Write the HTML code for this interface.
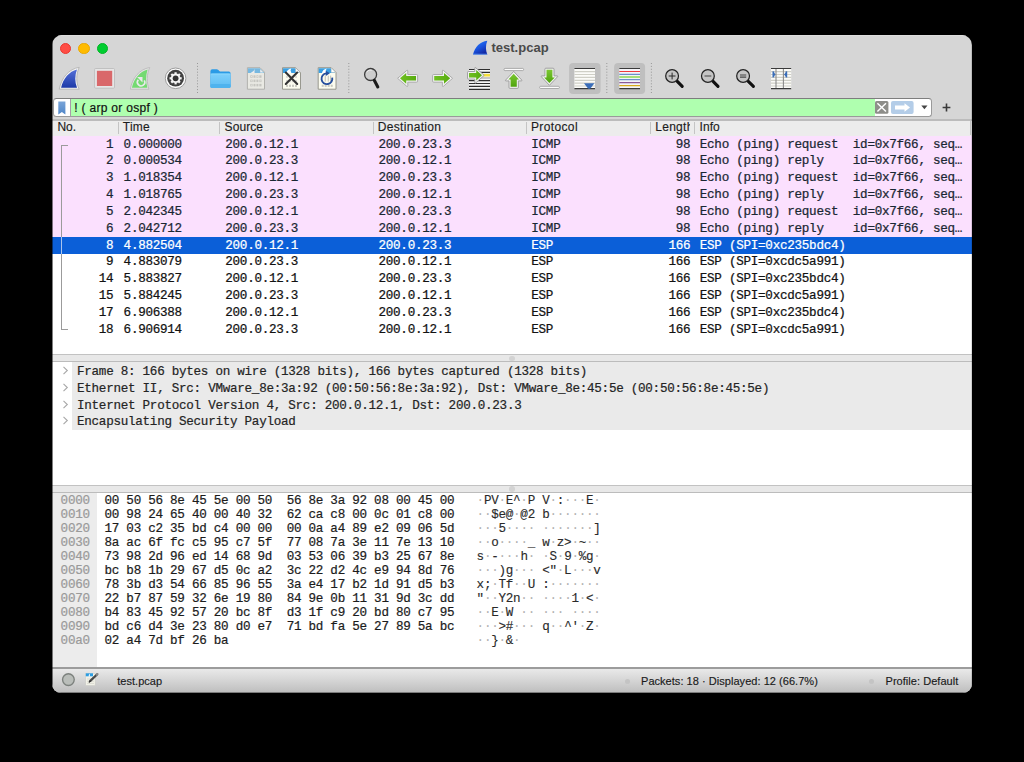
<!DOCTYPE html><html><head><meta charset="utf-8"><title>test.pcap</title><style>
*{margin:0;padding:0;box-sizing:border-box}
html,body{width:1024px;height:762px;background:#000;overflow:hidden}
body{position:relative;font-family:"Liberation Sans",sans-serif;font-size:12px;color:#1a1a1a}
.abs{position:absolute}
#win{position:absolute;left:52px;top:35px;width:920px;height:658px;border-radius:10px 10px 9px 9px;background:#d6d6d6;overflow:hidden}
#inner{position:absolute;left:-52px;top:-35px;width:1024px;height:762px}
.mono{font-family:"Liberation Mono",monospace;font-size:12.6px;letter-spacing:-0.2713px;white-space:pre;-webkit-text-stroke:0.24px currentColor}
.tl{position:absolute;width:11.6px;height:11.6px;border-radius:50%;top:42.6px}
#title{position:absolute;left:491.5px;top:41px;font-weight:bold;font-size:13px;color:#4a4a4a;line-height:14px;white-space:pre}
#filter{position:absolute;left:53.4px;top:98.1px;width:878.8px;height:18.65px;background:#fff;border:1px solid #9a9a9a;border-top-color:#7e7e7e;border-radius:3.5px;overflow:hidden}
#fgreen{position:absolute;left:15.4px;top:0;width:804.8px;height:17px;background:#afffaf;border-left:0.6px solid #a89aa8}
#ftext{position:absolute;left:74.3px;top:101px;font-size:12px;line-height:14px;color:#111;white-space:pre;letter-spacing:0.3px;-webkit-text-stroke:0.2px #111}
#hdr{position:absolute;left:52px;top:120.8px;width:920px;height:15.3px;background:#ececec}
.hl{position:absolute;top:120.2px;font-size:12px;line-height:14px;color:#1c1c1c;white-space:pre;-webkit-text-stroke:0.15px #1c1c1c}
.hd{position:absolute;top:122px;width:1px;height:12px;background:#c4c4c4}
.row{position:absolute;left:52px;width:920px;height:17.14px}
.icmp{background:#fbe0fe;color:#1a2733}
.esp{background:#fff;color:#121212}
.sel{background:#0b5fd8;color:#fff}
.c{position:absolute;top:0.7px;line-height:16.84px;height:16.84px}
.r{text-align:right}
.split{position:absolute;left:52px;width:920px;background:#e8e8e8;border-top:1px solid #c2c2c2;border-bottom:1px solid #bcbcbc}
.drow{position:absolute;left:72px;width:900px;height:17.14px;background:#eaeaea}
.dt{position:absolute;left:77px;line-height:16.84px;color:#242424;-webkit-text-stroke:0.2px #242424}
.arr{position:absolute;left:61.5px;width:7px;height:9px}
.hx{position:absolute;line-height:14px;height:14px}
.hx i{font-style:normal;color:#b2b2b2;-webkit-text-stroke:0}
#status{position:absolute;left:52px;top:667px;width:920px;height:26px;border-top:2px solid #9c9c9c;background:linear-gradient(#e9e9e9,#d6d6d6 45%,#bdbdbd)}
.st{position:absolute;top:673.6px;font-size:11px;line-height:14px;color:#1a1a1a;white-space:pre;letter-spacing:0.04px;-webkit-text-stroke:0.15px #1a1a1a}
</style></head><body>
<div id="win"><div id="inner">
<div class="abs" style="left:52px;top:35px;width:920px;height:1.3px;background:#dedede"></div>
<div class="tl" style="left:59.6px;background:#ff4d45;border:0.6px solid #ea372f"></div>
<div class="tl" style="left:78.3px;background:#ffbb00;border:0.6px solid #e8a700"></div>
<div class="tl" style="left:96.9px;background:#00cd30;border:0.6px solid #00b526"></div>
<svg class="abs" style="left:472px;top:40px" width="17" height="16" viewBox="0 0 17 16"><defs><linearGradient id="tf" x1="0" y1="0" x2="0.6" y2="1"><stop offset="0" stop-color="#2a86ff"/><stop offset="0.55" stop-color="#1a55e0"/><stop offset="1" stop-color="#1228a4"/></linearGradient></defs><path d="M15.3 0.8 C8 1.5 3 7 1 14.6 L15.3 14.6 C13.6 10.5 13.4 5.5 15.3 0.8 Z" fill="url(#tf)"/><path d="M1.2 14.2 L15.2 14.2" stroke="#5a9af8" stroke-width="1" opacity=".8"/></svg>
<div id="title">test.pcap</div>
<svg class="abs" style="left:52px;top:60px" width="920" height="38" viewBox="52 60 920 38">
<defs>
<linearGradient id="gBlue" x1="0" y1="0" x2="0" y2="1"><stop offset="0" stop-color="#5570d8"/><stop offset="1" stop-color="#1d3aa8"/></linearGradient>
<linearGradient id="gGrn" x1="0" y1="0" x2="0" y2="1"><stop offset="0" stop-color="#7cc832"/><stop offset="1" stop-color="#4fa30d"/></linearGradient>
<linearGradient id="gGrnH" x1="0" y1="0" x2="1" y2="0"><stop offset="0" stop-color="#6fbf22"/><stop offset="1" stop-color="#58ac10"/></linearGradient>
<linearGradient id="gFold" x1="0" y1="0" x2="0" y2="1"><stop offset="0" stop-color="#7fd0fb"/><stop offset="1" stop-color="#5bbcf3"/></linearGradient>
</defs>
<!-- separators -->
<g stroke="#8e8e8e" stroke-width="1" stroke-dasharray="1 1.9" opacity=".85">
<path d="M197.5 63 V93"/><path d="M348.8 63 V93"/><path d="M606.8 63 V93"/><path d="M651.4 63 V93"/>
</g>

<!-- 1 shark fin (start) -->
<path d="M79.2 67.3 C68.8 69 61.6 77.5 59.2 89.2 L79.2 89.2 C76.0 82.5 76 74.5 79.2 67.3 Z" fill="#f2f2f2" stroke="#b4b4b4" stroke-width="0.9"/>
<path d="M77 69.4 C69.4 71.2 63 78.4 61.1 87.8 L77 87.8 C74.7 81.8 74.7 75.4 77 69.4 Z" fill="url(#gBlue)"/>

<!-- 2 stop -->
<rect x="94.6" y="68.5" width="19.9" height="19.7" rx="1" fill="#e6e6e6" stroke="#bcbcbc" stroke-width="0.9"/>
<rect x="96.9" y="70.8" width="15.3" height="15.2" fill="#d9686a"/>

<!-- 3 restart fin (green) -->
<path d="M149.7 67.5 C139.6 69.2 132.4 77.6 130.3 89.2 L149 89.2 C146.6 82.5 146.6 74.5 149.7 67.5 Z" fill="#e6e4e6" stroke="#bababa" stroke-width="0.9"/>
<path d="M147.6 69.6 C140.4 71.4 134 78.4 131.9 87.7 L147.4 87.7 C145.7 81.8 145.7 75.6 147.6 69.6 Z" fill="#74da72"/>
<path d="M138.3 79.7 A3.7 3.7 0 1 0 144.3 80.3" fill="none" stroke="#ebe9ec" stroke-width="1.6"/>
<path d="M137.1 77 L142.5 77 L142.5 82.5 Z" fill="#ece8ed"/>

<!-- 4 options gear -->
<circle cx="175.6" cy="78.3" r="10.3" fill="#fdfdfd" stroke="#9c9c9c" stroke-width="1"/>
<circle cx="175.6" cy="78.2" r="8.4" fill="#414141"/>
<g fill="#f4f4f4"><circle cx="175.6" cy="78.3" r="4.8"/>
<g transform="translate(175.6 78.3)">
<rect x="-1.1" y="-6.1" width="2.2" height="12.2"/>
<rect x="-1.1" y="-6.1" width="2.2" height="12.2" transform="rotate(45)"/>
<rect x="-1.1" y="-6.1" width="2.2" height="12.2" transform="rotate(90)"/>
<rect x="-1.1" y="-6.1" width="2.2" height="12.2" transform="rotate(135)"/>
</g></g>
<circle cx="175.6" cy="78.3" r="2.9" fill="#333"/>

<!-- 5 folder -->
<path d="M210.4 71.2 Q210.4 69.3 212.3 69.3 H216.6 Q217.6 69.3 218.4 70.1 L219.3 71 Q220 71.6 221 71.6 H228.8 Q230.6 71.6 230.6 73.4 V86 Q230.6 87.9 228.8 87.9 H212.2 Q210.4 87.9 210.4 86 Z" fill="#2b9be6"/>
<rect x="210.4" y="73.6" width="20.2" height="14.3" rx="1.6" fill="url(#gFold)"/>
<rect x="210.4" y="84" width="20.2" height="3.9" rx="1.4" fill="#4fb3ee"/>
<rect x="210.4" y="73.6" width="20.2" height="1" fill="#8ad6fc"/>

<!-- 6 save (disabled) -->
<g opacity="0.58">
<path d="M247.4 67.7 H260 L264.5 72.2 V89.2 H247.4 Z" fill="#f7f7ee" stroke="#8e8e88" stroke-width="0.9"/>
<path d="M247.9 68.2 H259.8 L264 72.4 V72.9 H247.9 Z" fill="#34a3e8"/>
<path d="M250.6 72.9 Q253.6 72 254.9 69 Q254.2 71.2 254.6 72.9 Z" fill="#fff"/>
<path d="M260.2 69.2 V72.4 H263.5 Z" fill="#fff"/>
<g fill="#b9b9b1"><rect x="250.3" y="75.3" width="11.2" height="2.5"/><rect x="250.3" y="79.6" width="11.2" height="2.5"/><rect x="250.3" y="83.9" width="11.2" height="2.5"/></g>
<g fill="#f7f7ee"><rect x="252.6" y="75" width="0.9" height="12"/><rect x="255.5" y="75" width="0.9" height="12"/><rect x="258.4" y="75" width="0.9" height="12"/>
<rect x="251" y="76" width="0.9" height="1.1"/><rect x="256.8" y="76" width="0.9" height="1.1"/><rect x="251" y="80.3" width="0.9" height="1.1"/><rect x="259.8" y="80.3" width="0.9" height="1.1"/><rect x="251" y="84.6" width="0.9" height="1.1"/></g>
</g>

<!-- 7 close file -->
<path d="M282.5 67.7 H295.6 L300.5 72.6 V89.2 H282.5 Z" fill="#fcfcef" stroke="#8e8e86" stroke-width="0.9"/>
<path d="M283 68.2 H295.4 L299.4 72.2 V72.9 H283 Z" fill="#3b9fe2"/>
<path d="M286.4 72.9 Q287.2 69.4 291.2 68.6 Q289.8 70.4 291.4 72.9 Z" fill="#fff"/>
<path d="M295.6 68 V72.5 H300.2 Z" fill="#fff" stroke="#b0b0a8" stroke-width="0.4"/>
<g fill="#c9c9c0"><rect x="286" y="84.7" width="2" height="2.2"/><rect x="289" y="84.7" width="2" height="2.2"/><rect x="292" y="84.7" width="2" height="2.2"/><rect x="295" y="84.7" width="2" height="2.2"/></g>
<g fill="#d9d9d2"><rect x="286" y="75.6" width="11" height="2.2"/><rect x="286" y="80" width="11" height="2.2"/></g><g fill="#fcfcef"><rect x="288.3" y="75" width="0.8" height="8"/><rect x="291.2" y="75" width="0.8" height="8"/><rect x="294.1" y="75" width="0.8" height="8"/></g><path d="M285.8 72.6 L297.2 83.9 M297.2 72.6 L285.8 83.9" stroke="#333" stroke-width="2.1" stroke-linecap="round"/>

<!-- 8 reload -->
<path d="M318.2 67.7 H331.2 L336 72.5 V89.2 H318.2 Z" fill="#fcfcef" stroke="#8e8e86" stroke-width="0.9"/>
<path d="M318.7 68.2 H331 L335 72.2 V72.9 H318.7 Z" fill="#3b9fe2"/>
<path d="M322 72.9 Q322.8 69.6 326.6 68.6 Q325.2 70.6 326.4 72.9 Z" fill="#fff"/>
<path d="M331.2 68 V72.4 H335.7 Z" fill="#fff" stroke="#b0b0a8" stroke-width="0.4"/>
<g fill="#c9c9c0"><rect x="321.7" y="84.7" width="2" height="2.2"/><rect x="324.7" y="84.7" width="2" height="2.2"/><rect x="327.7" y="84.7" width="2" height="2.2"/><rect x="330.7" y="84.7" width="2" height="2.2"/>
<rect x="324.7" y="75.6" width="1.2" height="6"/><rect x="327.7" y="75.6" width="1.2" height="6"/><rect x="330" y="75.6" width="1.2" height="6"/></g>
<path d="M332.2 77.6 A5.4 5.4 0 1 1 326.2 73.4" fill="none" stroke="#27509e" stroke-width="1.9"/>
<path d="M325.8 70.8 L329.9 73.2 L325.8 75.9 Z" fill="#27509e"/>

<!-- 9 find (magnifier) -->
<circle cx="370.6" cy="74.5" r="6" fill="#cdcdcd" stroke="#3c3c3c" stroke-width="1.3"/>
<path d="M366.8 72 A4.3 4.3 0 0 1 371.8 70.2" fill="none" stroke="#efefef" stroke-width="0.9"/>
<path d="M374.3 80.3 L377.8 86.9" stroke="#1c1c1c" stroke-width="3.1" stroke-linecap="round"/>

<!-- 10 back -->
<path d="M397.6 78.3 L406.8 70.4 Q407.8 69.8 407.8 71 V74.5 H416.6 Q417.6 74.5 417.6 75.5 V81.2 Q417.6 82.2 416.6 82.2 H407.8 V85.7 Q407.8 86.9 406.8 86.3 Z" fill="#f0f0f0" stroke="#a6a6a6" stroke-width="0.9"/>
<path d="M400 78.3 L406.2 73 V76.1 H416 V80.6 H406.2 V83.7 Z" fill="url(#gGrnH)"/>

<!-- 11 forward -->
<path d="M452.6 78.3 L443.4 70.4 Q442.4 69.8 442.4 71 V74.5 H433.6 Q432.6 74.5 432.6 75.5 V81.2 Q432.6 82.2 433.6 82.2 H442.4 V85.7 Q442.4 86.9 443.4 86.3 Z" fill="#f0f0f0" stroke="#a6a6a6" stroke-width="0.9"/>
<path d="M450.2 78.3 L444 73 V76.1 H434.2 V80.6 H444 V83.7 Z" fill="url(#gGrnH)"/>

<!-- 12 goto -->
<rect x="469" y="69" width="21" height="21" fill="#f6f6f6"/>
<g stroke="#2e2e2e" stroke-width="1.1"><path d="M469 69.5 H490"/><path d="M469 72.4 H490"/><path d="M469 80.6 H490"/><path d="M469 83.5 H490"/><path d="M469 86.4 H490"/><path d="M469 89.4 H490"/></g>
<path d="M469 78 H490" stroke="#9a9a9a" stroke-width="1.1"/>
<rect x="483" y="73.9" width="7" height="2.6" fill="#f5de3c"/>
<path d="M484.2 75.3 L475.6 67.6 Q474.8 67.1 474.8 68.2 V71.5 H468.4 Q467.5 71.5 467.5 72.4 V78.2 Q467.5 79.1 468.4 79.1 H474.8 V82.4 Q474.8 83.5 475.6 83 Z" fill="#f0f0f0" stroke="#9a9a9a" stroke-width="0.9"/>
<path d="M482 75.3 L476.2 70 V73 H469 V77.6 H476.2 V80.6 Z" fill="url(#gGrnH)"/>

<!-- 13 first -->
<rect x="504" y="68.4" width="19.6" height="2.2" rx="1.1" fill="#fbfbfb" stroke="#9a9a9a" stroke-width="0.8"/>
<path d="M513.7 71.4 L521.8 80.1 Q522.3 80.9 521.3 80.9 H518.4 V87.4 Q518.4 88.4 517.4 88.4 H510 Q509 88.4 509 87.4 V80.9 H506.1 Q505.1 80.9 505.6 80.1 Z" fill="#f0f0f0" stroke="#9a9a9a" stroke-width="0.9"/>
<path d="M513.7 73.8 L519 79.4 H516.8 V86.8 H510.6 V79.4 H508.4 Z" fill="url(#gGrn)"/>

<!-- 14 last -->
<rect x="539.6" y="86.3" width="19.8" height="2.2" rx="1.1" fill="#fbfbfb" stroke="#9a9a9a" stroke-width="0.8"/>
<path d="M549.4 85.3 L541.3 76.7 Q540.8 75.9 541.8 75.9 H544.9 V69.2 Q544.9 68.2 545.9 68.2 H553 Q554 68.2 554 69.2 V75.9 H557.1 Q558.1 75.9 557.6 76.7 Z" fill="#f0f0f0" stroke="#9a9a9a" stroke-width="0.9"/>
<path d="M549.4 83 L544.1 77.4 H546.5 V69.8 H552.4 V77.4 H554.8 Z" fill="url(#gGrn)"/>

<!-- 15 autoscroll (checked) -->
<rect x="569.1" y="62.9" width="31.5" height="31.1" rx="4" fill="#bfbfbf"/>
<rect x="574.4" y="68" width="20.6" height="21" fill="#fbfbf8"/>
<g stroke="#cfcfc6" stroke-width="1.2"><path d="M574.4 71.6 H595"/><path d="M574.4 74.5 H595"/><path d="M574.4 77.4 H595"/><path d="M574.4 80.3 H595"/><path d="M574.4 83.2 H595"/><path d="M574.4 86 H595"/></g>
<path d="M574.4 68.5 H595 M574.4 88.6 H595" stroke="#3a3a3a" stroke-width="1.1"/>
<path d="M584 83.2 H594.4 L590.6 88.2 Q589.2 89.3 587.8 88.2 Z" fill="#3a6db8"/>

<!-- 16 colorize (checked) -->
<rect x="614.1" y="62.9" width="31" height="31.1" rx="4" fill="#bfbfbf"/>
<rect x="619.3" y="68" width="20.7" height="21" fill="#f4f4f8"/>
<path d="M619.3 68.5 H640 M619.3 88.6 H640" stroke="#3a3a3a" stroke-width="1.1"/>
<path d="M619.3 71.5 H640" stroke="#ee3c3c" stroke-width="1.2"/>
<path d="M619.3 74.4 H640" stroke="#6b90c9" stroke-width="1.2"/>
<path d="M619.3 77 H640" stroke="#a6e07a" stroke-width="2.2"/>
<path d="M619.3 79.7 H640" stroke="#6b90c9" stroke-width="1.2"/>
<path d="M619.3 82.6 H640" stroke="#8a5a98" stroke-width="1.1"/>
<path d="M619.3 85.6 H640" stroke="#d6aa1c" stroke-width="1.2"/>

<!-- 17 zoom in -->
<g>
<path d="M676.8 80.8 L682.2 86.3" stroke="#111" stroke-width="3.1" stroke-linecap="round"/>
<circle cx="672.1" cy="76" r="6.4" fill="#c4c4c4" stroke="#232323" stroke-width="1.25"/>
<path d="M668.7 76 H675.5 M672.1 72.6 V79.4" stroke="#2a2a2a" stroke-width="1"/>
</g>
<!-- 18 zoom out -->
<g>
<path d="M712.6 80.8 L718 86.3" stroke="#111" stroke-width="3.1" stroke-linecap="round"/>
<circle cx="707.9" cy="76" r="6.4" fill="#c4c4c4" stroke="#232323" stroke-width="1.25"/>
<path d="M704.5 76 H711.3" stroke="#444" stroke-width="1.2"/>
</g>
<!-- 19 zoom 1:1 -->
<g>
<path d="M747.8 80.8 L753.4 86.3" stroke="#111" stroke-width="3.1" stroke-linecap="round"/>
<circle cx="743.1" cy="76" r="6.4" fill="#c4c4c4" stroke="#232323" stroke-width="1.25"/>
<path d="M740 75 H746.2 M740 77.2 H746.2" stroke="#444" stroke-width="1.2"/>
</g>

<!-- 20 resize columns -->
<rect x="771" y="68" width="20.2" height="21" fill="#fbfbf8"/>
<g stroke="#cfcfc6" stroke-width="1.2"><path d="M771 71.6 H791.2"/><path d="M771 74.5 H791.2"/><path d="M771 77.4 H791.2"/><path d="M771 80.3 H791.2"/><path d="M771 83.2 H791.2"/><path d="M771 86 H791.2"/></g>
<path d="M776 68.5 V88.6 M783.4 68.5 V88.6" stroke="#8c8c8c" stroke-width="1.1"/>
<path d="M771 68.5 H791.2 M771 88.6 H791.2" stroke="#3a3a3a" stroke-width="1.1"/>
<path d="M772.8 71.2 L775.6 74.4 L772.8 77.6 Z" fill="#3a6db8"/><rect x="772.6" y="71.4" width="1.6" height="6" fill="#3a6db8"/>
<path d="M786.8 71.2 L784 74.4 L786.8 77.6 Z" fill="#3a6db8"/><rect x="785.6" y="71.4" width="1.6" height="6" fill="#3a6db8"/>
</svg>

<div class="abs" style="left:52px;top:119.3px;width:920px;height:1.6px;background:#bcbcbc"></div>
<div id="filter"><div id="fgreen"></div></div>
<svg class="abs" style="left:56.7px;top:100.6px" width="10" height="14" viewBox="0 0 10 14"><defs><linearGradient id="bm" x1="0" y1="0" x2="0" y2="1"><stop offset="0" stop-color="#7aa5d8"/><stop offset="1" stop-color="#4f86c8"/></linearGradient></defs><path d="M1.3 0.5 H8.4 V13.4 L4.85 10.9 L1.3 13.4 Z" fill="url(#bm)"/></svg>
<div id="ftext">! ( arp or ospf )</div>
<svg class="abs" style="left:875.4px;top:101px" width="14" height="13" viewBox="0 0 14 13"><rect x="0" y="0" width="13.4" height="12.8" rx="1.6" fill="#8e8e8a"/><path d="M2.4 2.2 L11 10.6 M11 2.2 L2.4 10.6" stroke="#fff" stroke-width="1.45" fill="none"/></svg>
<svg class="abs" style="left:891.3px;top:101px" width="23" height="13" viewBox="0 0 23 13"><rect x="0" y="0" width="22.6" height="13" rx="2" fill="#b4cde8"/><path d="M4 4.6 H13.5 V2.2 L19 6.5 L13.5 10.8 V8.4 H4 Z" fill="#fff"/></svg>
<svg class="abs" style="left:921px;top:105px" width="7" height="5" viewBox="0 0 7 5"><path d="M0.3 0.5 H6.5 L3.4 4.2 Z" fill="#444"/></svg>
<svg class="abs" style="left:942px;top:103px" width="9" height="9" viewBox="0 0 9 9"><path d="M4.5 0.6 V8.4 M0.6 4.5 H8.4" stroke="#3a3a3a" stroke-width="1.6" fill="none"/></svg>
<div id="hdr"></div>
<div class="hl" style="left:57.5px;letter-spacing:-0.05px">No.</div>
<div class="hl" style="left:122.8px;letter-spacing:0.25px">Time</div>
<div class="hl" style="left:224.6px;letter-spacing:0.07px">Source</div>
<div class="hl" style="left:377.8px;letter-spacing:0.31px">Destination</div>
<div class="hl" style="left:530.9px;letter-spacing:0.38px">Protocol</div>
<div class="hl" style="left:655.2px;width:35.2px;overflow:hidden;letter-spacing:0.3px">Length</div>
<div class="hl" style="left:699.5px;letter-spacing:0.08px">Info</div>
<div class="hd" style="left:117.9px"></div>
<div class="hd" style="left:219.4px"></div>
<div class="hd" style="left:373px"></div>
<div class="hd" style="left:525.9px"></div>
<div class="hd" style="left:650.4px"></div>
<div class="hd" style="left:694.3px"></div>
<div class="abs" style="left:969.5px;top:121px;width:1.5px;height:14px;background:#c2c2c2"></div>
<div class="abs" style="left:52px;top:136px;width:920px;height:219px;background:#fff"></div>
<div class="row mono icmp" style="top:135.90px"><span class="c r" style="left:0;width:61.3px">1</span><span class="c" style="left:71.6px">0.000000</span><span class="c" style="left:173.3px">200.0.12.1</span><span class="c" style="left:326.5px">200.0.23.3</span><span class="c" style="left:479.3px">ICMP</span><span class="c r" style="left:580px;width:58.4px">98</span><span class="c" style="left:647.8px">Echo (ping) request  id=0x7f66, seq…</span></div>
<div class="row mono icmp" style="top:152.74px"><span class="c r" style="left:0;width:61.3px">2</span><span class="c" style="left:71.6px">0.000534</span><span class="c" style="left:173.3px">200.0.23.3</span><span class="c" style="left:326.5px">200.0.12.1</span><span class="c" style="left:479.3px">ICMP</span><span class="c r" style="left:580px;width:58.4px">98</span><span class="c" style="left:647.8px">Echo (ping) reply    id=0x7f66, seq…</span></div>
<div class="row mono icmp" style="top:169.58px"><span class="c r" style="left:0;width:61.3px">3</span><span class="c" style="left:71.6px">1.018354</span><span class="c" style="left:173.3px">200.0.12.1</span><span class="c" style="left:326.5px">200.0.23.3</span><span class="c" style="left:479.3px">ICMP</span><span class="c r" style="left:580px;width:58.4px">98</span><span class="c" style="left:647.8px">Echo (ping) request  id=0x7f66, seq…</span></div>
<div class="row mono icmp" style="top:186.42px"><span class="c r" style="left:0;width:61.3px">4</span><span class="c" style="left:71.6px">1.018765</span><span class="c" style="left:173.3px">200.0.23.3</span><span class="c" style="left:326.5px">200.0.12.1</span><span class="c" style="left:479.3px">ICMP</span><span class="c r" style="left:580px;width:58.4px">98</span><span class="c" style="left:647.8px">Echo (ping) reply    id=0x7f66, seq…</span></div>
<div class="row mono icmp" style="top:203.26px"><span class="c r" style="left:0;width:61.3px">5</span><span class="c" style="left:71.6px">2.042345</span><span class="c" style="left:173.3px">200.0.12.1</span><span class="c" style="left:326.5px">200.0.23.3</span><span class="c" style="left:479.3px">ICMP</span><span class="c r" style="left:580px;width:58.4px">98</span><span class="c" style="left:647.8px">Echo (ping) request  id=0x7f66, seq…</span></div>
<div class="row mono icmp" style="top:220.10px"><span class="c r" style="left:0;width:61.3px">6</span><span class="c" style="left:71.6px">2.042712</span><span class="c" style="left:173.3px">200.0.23.3</span><span class="c" style="left:326.5px">200.0.12.1</span><span class="c" style="left:479.3px">ICMP</span><span class="c r" style="left:580px;width:58.4px">98</span><span class="c" style="left:647.8px">Echo (ping) reply    id=0x7f66, seq…</span></div>
<div class="row mono sel" style="top:236.94px"><span class="c r" style="left:0;width:61.3px">8</span><span class="c" style="left:71.6px">4.882504</span><span class="c" style="left:173.3px">200.0.12.1</span><span class="c" style="left:326.5px">200.0.23.3</span><span class="c" style="left:479.3px">ESP</span><span class="c r" style="left:580px;width:58.4px">166</span><span class="c" style="left:647.8px">ESP (SPI=0xc235bdc4)</span></div>
<div class="row mono esp" style="top:253.78px"><span class="c r" style="left:0;width:61.3px">9</span><span class="c" style="left:71.6px">4.883079</span><span class="c" style="left:173.3px">200.0.23.3</span><span class="c" style="left:326.5px">200.0.12.1</span><span class="c" style="left:479.3px">ESP</span><span class="c r" style="left:580px;width:58.4px">166</span><span class="c" style="left:647.8px">ESP (SPI=0xcdc5a991)</span></div>
<div class="row mono esp" style="top:270.62px"><span class="c r" style="left:0;width:61.3px">14</span><span class="c" style="left:71.6px">5.883827</span><span class="c" style="left:173.3px">200.0.12.1</span><span class="c" style="left:326.5px">200.0.23.3</span><span class="c" style="left:479.3px">ESP</span><span class="c r" style="left:580px;width:58.4px">166</span><span class="c" style="left:647.8px">ESP (SPI=0xc235bdc4)</span></div>
<div class="row mono esp" style="top:287.46px"><span class="c r" style="left:0;width:61.3px">15</span><span class="c" style="left:71.6px">5.884245</span><span class="c" style="left:173.3px">200.0.23.3</span><span class="c" style="left:326.5px">200.0.12.1</span><span class="c" style="left:479.3px">ESP</span><span class="c r" style="left:580px;width:58.4px">166</span><span class="c" style="left:647.8px">ESP (SPI=0xcdc5a991)</span></div>
<div class="row mono esp" style="top:304.30px"><span class="c r" style="left:0;width:61.3px">17</span><span class="c" style="left:71.6px">6.906388</span><span class="c" style="left:173.3px">200.0.12.1</span><span class="c" style="left:326.5px">200.0.23.3</span><span class="c" style="left:479.3px">ESP</span><span class="c r" style="left:580px;width:58.4px">166</span><span class="c" style="left:647.8px">ESP (SPI=0xc235bdc4)</span></div>
<div class="row mono esp" style="top:321.14px"><span class="c r" style="left:0;width:61.3px">18</span><span class="c" style="left:71.6px">6.906914</span><span class="c" style="left:173.3px">200.0.23.3</span><span class="c" style="left:326.5px">200.0.12.1</span><span class="c" style="left:479.3px">ESP</span><span class="c r" style="left:580px;width:58.4px">166</span><span class="c" style="left:647.8px">ESP (SPI=0xcdc5a991)</span></div>
<div class="abs" style="left:61px;top:145.3px;width:1px;height:185px;background:#9b9b9b"></div>
<div class="abs" style="left:61px;top:145.3px;width:7px;height:1px;background:#9b9b9b"></div>
<div class="abs" style="left:61px;top:329.4px;width:7px;height:1px;background:#9b9b9b"></div>
<div class="abs" style="left:61px;top:237px;width:1px;height:16.6px;background:#a9c4ee"></div>
<div class="split" style="top:354px;height:8.3px"></div>
<div class="abs" style="left:509.1px;top:355.5px;width:5.6px;height:5.6px;border-radius:50%;background:#d3d3d3"></div>
<div class="abs" style="left:52px;top:362.3px;width:920px;height:123px;background:#fff"></div>
<div class="drow" style="top:362.30px"></div>
<div class="dt mono" style="top:363.90px">Frame 8: 166 bytes on wire (1328 bits), 166 bytes captured (1328 bits)</div>
<svg class="arr" style="top:365.90px" viewBox="0 0 7 9"><path d="M1.5 0.8 L5.3 4.5 L1.5 8.2" stroke="#a8a8a8" stroke-width="1.1" fill="none"/></svg>
<div class="drow" style="top:379.14px"></div>
<div class="dt mono" style="top:380.74px">Ethernet II, Src: VMware_8e:3a:92 (00:50:56:8e:3a:92), Dst: VMware_8e:45:5e (00:50:56:8e:45:5e)</div>
<svg class="arr" style="top:382.74px" viewBox="0 0 7 9"><path d="M1.5 0.8 L5.3 4.5 L1.5 8.2" stroke="#a8a8a8" stroke-width="1.1" fill="none"/></svg>
<div class="drow" style="top:395.98px"></div>
<div class="dt mono" style="top:397.58px">Internet Protocol Version 4, Src: 200.0.12.1, Dst: 200.0.23.3</div>
<svg class="arr" style="top:399.58px" viewBox="0 0 7 9"><path d="M1.5 0.8 L5.3 4.5 L1.5 8.2" stroke="#a8a8a8" stroke-width="1.1" fill="none"/></svg>
<div class="drow" style="top:412.82px"></div>
<div class="dt mono" style="top:414.42px">Encapsulating Security Payload</div>
<svg class="arr" style="top:416.42px" viewBox="0 0 7 9"><path d="M1.5 0.8 L5.3 4.5 L1.5 8.2" stroke="#a8a8a8" stroke-width="1.1" fill="none"/></svg>
<div class="split" style="top:485px;height:7.8px"></div>
<div class="abs" style="left:509.1px;top:486.3px;width:5.6px;height:5.6px;border-radius:50%;background:#d3d3d3"></div>
<div class="abs" style="left:52px;top:492.8px;width:920px;height:175px;background:#fff"></div>
<div class="abs" style="left:52px;top:492.8px;width:45px;height:175px;background:#ececec"></div>
<div class="hx mono" style="left:60.6px;top:494.2px;color:#9a9a9a">0000</div>
<div class="hx mono" style="left:104.5px;top:494.2px;color:#1c1c1c;-webkit-text-stroke:0.22px #1c1c1c">00 50 56 8e 45 5e 00 50  56 8e 3a 92 08 00 45 00</div>
<div class="hx mono" style="left:476.6px;top:494.2px;color:#2a2a2a;-webkit-text-stroke:0.12px #2a2a2a"><i>·</i>PV<i>·</i>E^<i>·</i>P V<i>·</i>:<i>·</i><i>·</i><i>·</i>E<i>·</i></div>
<div class="hx mono" style="left:60.6px;top:508.2px;color:#9a9a9a">0010</div>
<div class="hx mono" style="left:104.5px;top:508.2px;color:#1c1c1c;-webkit-text-stroke:0.22px #1c1c1c">00 98 24 65 40 00 40 32  62 ca c8 00 0c 01 c8 00</div>
<div class="hx mono" style="left:476.6px;top:508.2px;color:#2a2a2a;-webkit-text-stroke:0.12px #2a2a2a"><i>·</i><i>·</i>$e@<i>·</i>@2 b<i>·</i><i>·</i><i>·</i><i>·</i><i>·</i><i>·</i><i>·</i></div>
<div class="hx mono" style="left:60.6px;top:522.2px;color:#9a9a9a">0020</div>
<div class="hx mono" style="left:104.5px;top:522.2px;color:#1c1c1c;-webkit-text-stroke:0.22px #1c1c1c">17 03 c2 35 bd c4 00 00  00 0a a4 89 e2 09 06 5d</div>
<div class="hx mono" style="left:476.6px;top:522.2px;color:#2a2a2a;-webkit-text-stroke:0.12px #2a2a2a"><i>·</i><i>·</i><i>·</i>5<i>·</i><i>·</i><i>·</i><i>·</i> <i>·</i><i>·</i><i>·</i><i>·</i><i>·</i><i>·</i><i>·</i>]</div>
<div class="hx mono" style="left:60.6px;top:536.2px;color:#9a9a9a">0030</div>
<div class="hx mono" style="left:104.5px;top:536.2px;color:#1c1c1c;-webkit-text-stroke:0.22px #1c1c1c">8a ac 6f fc c5 95 c7 5f  77 08 7a 3e 11 7e 13 10</div>
<div class="hx mono" style="left:476.6px;top:536.2px;color:#2a2a2a;-webkit-text-stroke:0.12px #2a2a2a"><i>·</i><i>·</i>o<i>·</i><i>·</i><i>·</i><i>·</i>_ w<i>·</i>z&gt;<i>·</i>~<i>·</i><i>·</i></div>
<div class="hx mono" style="left:60.6px;top:550.2px;color:#9a9a9a">0040</div>
<div class="hx mono" style="left:104.5px;top:550.2px;color:#1c1c1c;-webkit-text-stroke:0.22px #1c1c1c">73 98 2d 96 ed 14 68 9d  03 53 06 39 b3 25 67 8e</div>
<div class="hx mono" style="left:476.6px;top:550.2px;color:#2a2a2a;-webkit-text-stroke:0.12px #2a2a2a">s<i>·</i>-<i>·</i><i>·</i><i>·</i>h<i>·</i> <i>·</i>S<i>·</i>9<i>·</i>%g<i>·</i></div>
<div class="hx mono" style="left:60.6px;top:564.2px;color:#9a9a9a">0050</div>
<div class="hx mono" style="left:104.5px;top:564.2px;color:#1c1c1c;-webkit-text-stroke:0.22px #1c1c1c">bc b8 1b 29 67 d5 0c a2  3c 22 d2 4c e9 94 8d 76</div>
<div class="hx mono" style="left:476.6px;top:564.2px;color:#2a2a2a;-webkit-text-stroke:0.12px #2a2a2a"><i>·</i><i>·</i><i>·</i>)g<i>·</i><i>·</i><i>·</i> &lt;"<i>·</i>L<i>·</i><i>·</i><i>·</i>v</div>
<div class="hx mono" style="left:60.6px;top:578.2px;color:#9a9a9a">0060</div>
<div class="hx mono" style="left:104.5px;top:578.2px;color:#1c1c1c;-webkit-text-stroke:0.22px #1c1c1c">78 3b d3 54 66 85 96 55  3a e4 17 b2 1d 91 d5 b3</div>
<div class="hx mono" style="left:476.6px;top:578.2px;color:#2a2a2a;-webkit-text-stroke:0.12px #2a2a2a">x;<i>·</i>Tf<i>·</i><i>·</i>U :<i>·</i><i>·</i><i>·</i><i>·</i><i>·</i><i>·</i><i>·</i></div>
<div class="hx mono" style="left:60.6px;top:592.2px;color:#9a9a9a">0070</div>
<div class="hx mono" style="left:104.5px;top:592.2px;color:#1c1c1c;-webkit-text-stroke:0.22px #1c1c1c">22 b7 87 59 32 6e 19 80  84 9e 0b 11 31 9d 3c dd</div>
<div class="hx mono" style="left:476.6px;top:592.2px;color:#2a2a2a;-webkit-text-stroke:0.12px #2a2a2a">"<i>·</i><i>·</i>Y2n<i>·</i><i>·</i> <i>·</i><i>·</i><i>·</i><i>·</i>1<i>·</i>&lt;<i>·</i></div>
<div class="hx mono" style="left:60.6px;top:606.2px;color:#9a9a9a">0080</div>
<div class="hx mono" style="left:104.5px;top:606.2px;color:#1c1c1c;-webkit-text-stroke:0.22px #1c1c1c">b4 83 45 92 57 20 bc 8f  d3 1f c9 20 bd 80 c7 95</div>
<div class="hx mono" style="left:476.6px;top:606.2px;color:#2a2a2a;-webkit-text-stroke:0.12px #2a2a2a"><i>·</i><i>·</i>E<i>·</i>W <i>·</i><i>·</i> <i>·</i><i>·</i><i>·</i> <i>·</i><i>·</i><i>·</i><i>·</i></div>
<div class="hx mono" style="left:60.6px;top:620.2px;color:#9a9a9a">0090</div>
<div class="hx mono" style="left:104.5px;top:620.2px;color:#1c1c1c;-webkit-text-stroke:0.22px #1c1c1c">bd c6 d4 3e 23 80 d0 e7  71 bd fa 5e 27 89 5a bc</div>
<div class="hx mono" style="left:476.6px;top:620.2px;color:#2a2a2a;-webkit-text-stroke:0.12px #2a2a2a"><i>·</i><i>·</i><i>·</i>&gt;#<i>·</i><i>·</i><i>·</i> q<i>·</i><i>·</i>^'<i>·</i>Z<i>·</i></div>
<div class="hx mono" style="left:60.6px;top:634.2px;color:#9a9a9a">00a0</div>
<div class="hx mono" style="left:104.5px;top:634.2px;color:#1c1c1c;-webkit-text-stroke:0.22px #1c1c1c">02 a4 7d bf 26 ba</div>
<div class="hx mono" style="left:476.6px;top:634.2px;color:#2a2a2a;-webkit-text-stroke:0.12px #2a2a2a"><i>·</i><i>·</i>}<i>·</i>&amp;<i>·</i></div>
<div id="status"></div>
<svg class="abs" style="left:60px;top:671px" width="17" height="17" viewBox="60 671 17 17"><circle cx="68.4" cy="679.6" r="5.85" fill="#babeba" stroke="#7c817d" stroke-width="1.35"/></svg>
<svg class="abs" style="left:84px;top:671px" width="16" height="16" viewBox="84 671 16 16">
<rect x="85.8" y="673.3" width="9.3" height="12.1" fill="#f1f1e8" stroke="#c9c9c0" stroke-width="0.4"/>
<rect x="85.8" y="673.3" width="7.2" height="3" fill="#2d9de2"/>
<path d="M88.6 676.4 Q88.5 674.6 90 673.6 Q89.6 675.2 90 676.4 Z" fill="#fff"/>
<g stroke="#d2d2c8" stroke-width="0.7"><path d="M87 679 H94"/><path d="M87 681.2 H94"/><path d="M87 683.4 H94"/></g>
<path d="M97 674.5 L90.3 680.9" stroke="#4a4a4a" stroke-width="2.3" stroke-linecap="round"/>
<path d="M90.3 680.9 L89.3 681.9" stroke="#333" stroke-width="1.4" stroke-linecap="round"/>
<path d="M97.4 674.1 L96.8 674.7" stroke="#8a8a8a" stroke-width="2.3" stroke-linecap="round"/>
</svg>

<div class="st" style="left:117.2px">test.pcap</div>
<div class="abs" style="left:625px;top:678.5px;width:5px;height:5px;border-radius:50%;background:#c4c4c4"></div>
<div class="st" style="left:641px">Packets: 18 · Displayed: 12 (66.7%)</div>
<div class="abs" style="left:869px;top:678.5px;width:5px;height:5px;border-radius:50%;background:#c4c4c4"></div>
<div class="st" style="left:885.5px">Profile: Default</div>
<div class="abs" style="left:52px;top:35px;width:1px;height:658px;background:rgba(0,0,0,.5)"></div>
<div class="abs" style="left:52px;top:692px;width:920px;height:1px;background:rgba(0,0,0,.35)"></div>
<div class="abs" style="left:971px;top:35px;width:1px;height:658px;background:rgba(0,0,0,.12)"></div>
</div></div></body></html>
